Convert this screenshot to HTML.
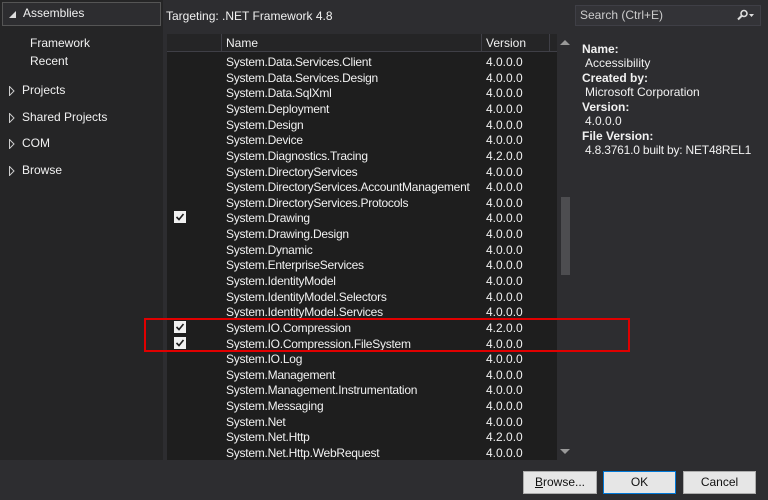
<!DOCTYPE html>
<html><head><style>
*{margin:0;padding:0;box-sizing:border-box}
body{width:768px;height:500px;background:#2d2d30;font-family:"Segoe UI","Liberation Sans",sans-serif;font-size:12px;color:#f1f1f1;position:relative;overflow:hidden}
.abs{position:absolute}
.left{left:0;top:0;width:163px;height:460px;background:#252526}
.asm{left:2px;top:2px;width:159px;height:24px;border:1px solid #555;background:#2d2d30}
.list{left:167px;top:34px;width:390px;height:426px;background:#1e1e1e}
.hdr{left:167px;top:34px;width:390px;height:18px;background:#252526;border-bottom:1px solid #3f3f46}
.row{position:absolute;left:226px;white-space:nowrap;font-size:12px;line-height:15px;letter-spacing:-0.25px;margin-top:1px}
.ver{position:absolute;left:486px;font-size:12px;line-height:15px;margin-top:1px}
.cb{position:absolute;left:174px;width:12px;height:12px;background:#f1f1f1}
.cb svg{display:block}
.btn{position:absolute;top:471px;height:23px;background:#e6e6e6;border:1px solid #adadad;color:#111;text-align:center;line-height:21px;font-size:12px}
</style></head><body>
<div class="abs left"></div>
<div class="abs asm"></div>
<svg class="abs" style="left:9px;top:11px" width="7" height="7"><path d="M7 0V7H0Z" fill="#ddd"/></svg>
<div class="abs" style="left:23px;top:6px">Assemblies</div>
<div class="abs" style="left:30px;top:36px">Framework</div>
<div class="abs" style="left:30px;top:54px">Recent</div>
<svg class="abs" style="left:9px;top:86px" width="6" height="10"><path d="M0.5 0.5L5 5L0.5 9.5Z" fill="none" stroke="#ccc"/></svg>
<div class="abs" style="left:22px;top:83px">Projects</div>
<svg class="abs" style="left:9px;top:113px" width="6" height="10"><path d="M0.5 0.5L5 5L0.5 9.5Z" fill="none" stroke="#ccc"/></svg>
<div class="abs" style="left:22px;top:110px">Shared Projects</div>
<svg class="abs" style="left:9px;top:139px" width="6" height="10"><path d="M0.5 0.5L5 5L0.5 9.5Z" fill="none" stroke="#ccc"/></svg>
<div class="abs" style="left:22px;top:136px">COM</div>
<svg class="abs" style="left:9px;top:166px" width="6" height="10"><path d="M0.5 0.5L5 5L0.5 9.5Z" fill="none" stroke="#ccc"/></svg>
<div class="abs" style="left:22px;top:163px">Browse</div>

<div class="abs" style="left:166px;top:9px">Targeting: .NET Framework 4.8</div>
<div class="abs" style="left:575px;top:5px;width:186px;height:21px;background:#333337;border:1px solid #3f3f46"></div>
<div class="abs" style="left:580px;top:8px;color:#ccc">Search (Ctrl+E)</div>
<svg class="abs" style="left:736px;top:9px" width="20" height="12"><circle cx="8" cy="4.5" r="3" fill="none" stroke="#ddd" stroke-width="1.6"/><path d="M6 6.5L2 10.5" stroke="#ddd" stroke-width="2"/><path d="M13 5h5l-2.5 3z" fill="#ddd"/></svg>

<div class="abs list"></div>
<div class="abs hdr"></div>
<div class="abs" style="left:221px;top:34px;width:1px;height:18px;background:#3f3f46"></div>
<div class="abs" style="left:481px;top:34px;width:1px;height:18px;background:#3f3f46"></div>
<div class="abs" style="left:549px;top:34px;width:1px;height:18px;background:#3f3f46"></div>
<div class="abs" style="left:226px;top:36px">Name</div>
<div class="abs" style="left:486px;top:36px">Version</div>
<svg class="abs" style="left:560px;top:39px" width="10" height="6"><path d="M0 6L5 1L10 6Z" fill="#999"/></svg>
<svg class="abs" style="left:560px;top:449px" width="10" height="6"><path d="M0 0L5 5L10 0Z" fill="#999"/></svg>
<div class="abs" style="left:561px;top:197px;width:9px;height:78px;background:#4d4d50"></div>

<div class="row" style="top:54px">System.Data.Services.Client</div><div class="ver" style="top:54px">4.0.0.0</div>
<div class="row" style="top:69.6px">System.Data.Services.Design</div><div class="ver" style="top:69.6px">4.0.0.0</div>
<div class="row" style="top:85.3px">System.Data.SqlXml</div><div class="ver" style="top:85.3px">4.0.0.0</div>
<div class="row" style="top:100.9px">System.Deployment</div><div class="ver" style="top:100.9px">4.0.0.0</div>
<div class="row" style="top:116.6px">System.Design</div><div class="ver" style="top:116.6px">4.0.0.0</div>
<div class="row" style="top:132.2px">System.Device</div><div class="ver" style="top:132.2px">4.0.0.0</div>
<div class="row" style="top:147.8px">System.Diagnostics.Tracing</div><div class="ver" style="top:147.8px">4.2.0.0</div>
<div class="row" style="top:163.5px">System.DirectoryServices</div><div class="ver" style="top:163.5px">4.0.0.0</div>
<div class="row" style="top:179.1px">System.DirectoryServices.AccountManagement</div><div class="ver" style="top:179.1px">4.0.0.0</div>
<div class="row" style="top:194.8px">System.DirectoryServices.Protocols</div><div class="ver" style="top:194.8px">4.0.0.0</div>
<div class="row" style="top:210.4px">System.Drawing</div><div class="ver" style="top:210.4px">4.0.0.0</div>
<div class="row" style="top:226px">System.Drawing.Design</div><div class="ver" style="top:226px">4.0.0.0</div>
<div class="row" style="top:241.7px">System.Dynamic</div><div class="ver" style="top:241.7px">4.0.0.0</div>
<div class="row" style="top:257.3px">System.EnterpriseServices</div><div class="ver" style="top:257.3px">4.0.0.0</div>
<div class="row" style="top:273px">System.IdentityModel</div><div class="ver" style="top:273px">4.0.0.0</div>
<div class="row" style="top:288.6px">System.IdentityModel.Selectors</div><div class="ver" style="top:288.6px">4.0.0.0</div>
<div class="row" style="top:304.2px">System.IdentityModel.Services</div><div class="ver" style="top:304.2px">4.0.0.0</div>
<div class="row" style="top:319.9px">System.IO.Compression</div><div class="ver" style="top:319.9px">4.2.0.0</div>
<div class="row" style="top:335.5px">System.IO.Compression.FileSystem</div><div class="ver" style="top:335.5px">4.0.0.0</div>
<div class="row" style="top:351.2px">System.IO.Log</div><div class="ver" style="top:351.2px">4.0.0.0</div>
<div class="row" style="top:366.8px">System.Management</div><div class="ver" style="top:366.8px">4.0.0.0</div>
<div class="row" style="top:382.4px">System.Management.Instrumentation</div><div class="ver" style="top:382.4px">4.0.0.0</div>
<div class="row" style="top:398.1px">System.Messaging</div><div class="ver" style="top:398.1px">4.0.0.0</div>
<div class="row" style="top:413.7px">System.Net</div><div class="ver" style="top:413.7px">4.0.0.0</div>
<div class="row" style="top:429.4px">System.Net.Http</div><div class="ver" style="top:429.4px">4.2.0.0</div>
<div class="row" style="top:445px">System.Net.Http.WebRequest</div><div class="ver" style="top:445px">4.0.0.0</div>

<div class="cb" style="top:211px"><svg width="12" height="12"><path d="M2.5 6L5 8.5L9.5 3" fill="none" stroke="#1e1e1e" stroke-width="1.6"/></svg></div>
<div class="cb" style="top:321px"><svg width="12" height="12"><path d="M2.5 6L5 8.5L9.5 3" fill="none" stroke="#1e1e1e" stroke-width="1.6"/></svg></div>
<div class="cb" style="top:337px"><svg width="12" height="12"><path d="M2.5 6L5 8.5L9.5 3" fill="none" stroke="#1e1e1e" stroke-width="1.6"/></svg></div>
<div class="abs" style="left:144px;top:318px;width:486px;height:34px;border:2px solid #e00000"></div>

<div class="abs" style="left:582px;top:42px;font-weight:bold">Name:</div>
<div class="abs" style="left:585px;top:56px">Accessibility</div>
<div class="abs" style="left:582px;top:71px;font-weight:bold">Created by:</div>
<div class="abs" style="left:585px;top:85px">Microsoft Corporation</div>
<div class="abs" style="left:582px;top:100px;font-weight:bold">Version:</div>
<div class="abs" style="left:585px;top:114px">4.0.0.0</div>
<div class="abs" style="left:582px;top:129px;font-weight:bold">File Version:</div>
<div class="abs" style="left:585px;top:143px;letter-spacing:-0.2px">4.8.3761.0 built by: NET48REL1</div>

<div class="btn" style="left:523px;width:74px"><u>B</u>rowse...</div>
<div class="btn" style="left:603px;width:73px;border-color:#0078d7">OK</div>
<div class="btn" style="left:683px;width:73px">Cancel</div>
</body></html>
